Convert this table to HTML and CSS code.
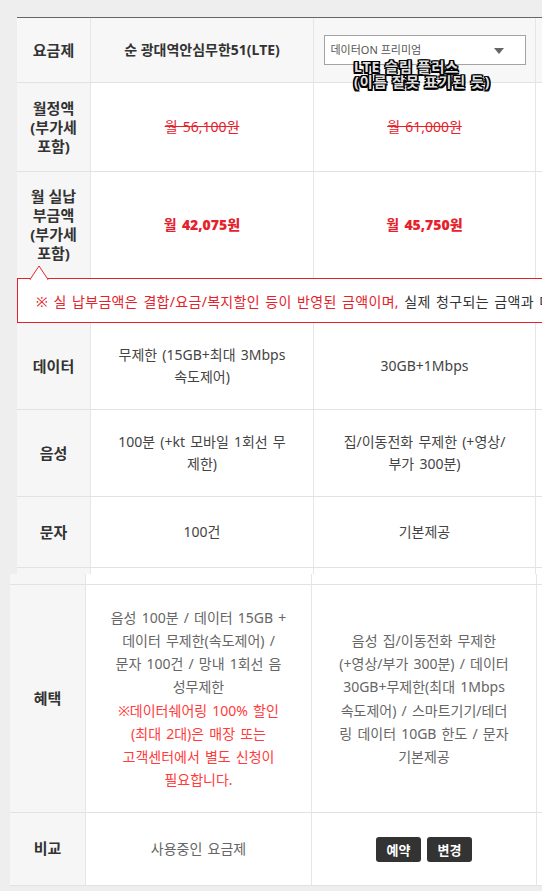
FILE: index.html
```html
<!DOCTYPE html>
<html lang="ko">
<head>
<meta charset="utf-8">
<title>요금제 비교</title>
<link rel="stylesheet" href="styles.css">
</head>
<body>
<div class="page">
  <div class="plan-table upper">
    <div class="row head">
      <div class="cell label">요금제</div>
      <div class="cell name">순 광대역안심무한51(LTE)</div>
      <div class="cell pick">
        <div class="select">데이터ON 프리미엄<span class="caret"></span></div>
        <div class="note">LTE 슬림 플러스<br>(이름 잘못 표기된 듯)</div>
      </div>
      <div class="cell"></div>
    </div>
    <div class="row r-month">
      <div class="cell label">월정액<br>(부가세<br>포함)</div>
      <div class="cell"><span class="old">월 56,100원</span></div>
      <div class="cell"><span class="old">월 61,000원</span></div>
      <div class="cell"></div>
    </div>
    <div class="row r-real">
      <div class="cell label">월 실납<br>부금액<br>(부가세<br>포함)</div>
      <div class="cell"><span class="price">월 <b>42,075원</b></span></div>
      <div class="cell"><span class="price">월 <b>45,750원</b></span></div>
      <div class="cell"></div>
    </div>
    <div class="tip">
      <svg class="tip-arrow" width="20" height="15" viewBox="0 0 20 15"><polygon points="1,14.5 10,1 19,14.5" fill="#fff" stroke="#e5222b" stroke-width="1"/><rect x="1.6" y="14" width="16.8" height="2" fill="#fff"/></svg>
      <p class="tip-text"><span class="red">※ 실 납부금액은 결합/요금/복지할인 등이 반영된 금액이며,</span> 실제 청구되는 금액과 다를 수 있습니다.</p>
    </div>
    <div class="row r-data">
      <div class="cell label">데이터</div>
      <div class="cell"><span class="lines">무제한 (15GB+최대 3Mbps<br>속도제어)</span></div>
      <div class="cell">30GB+1Mbps</div>
      <div class="cell"></div>
    </div>
    <div class="row r-voice">
      <div class="cell label">음성</div>
      <div class="cell"><span class="lines">100분 (+kt 모바일 1회선 무<br>제한)</span></div>
      <div class="cell"><span class="lines">집/이동전화 무제한 (+영상/<br>부가 300분)</span></div>
      <div class="cell"></div>
    </div>
    <div class="row r-sms">
      <div class="cell label">문자</div>
      <div class="cell">100건</div>
      <div class="cell">기본제공</div>
      <div class="cell"></div>
    </div>
    <div class="row r-strip">
      <div class="cell label"></div>
      <div class="cell"></div>
      <div class="cell"></div>
      <div class="cell"></div>
    </div>
  </div>

  <div class="plan-table lower">
    <div class="row r-strip2">
      <div class="cell label"></div>
      <div class="cell"></div>
      <div class="cell"></div>
      <div class="cell"></div>
    </div>
    <div class="row r-benefit">
      <div class="cell label">혜택</div>
      <div class="cell"><div class="lines">음성 100분 / 데이터 15GB +<br>데이터 무제한(속도제어) /<br>문자 100건 / 망내 1회선 음<br>성무제한<span class="warn">※데이터쉐어링 100% 할인<br>(최대 2대)은 매장 또는<br>고객센터에서 별도 신청이<br>필요합니다.</span></div></div>
      <div class="cell"><div class="lines">음성 집/이동전화 무제한<br>(+영상/부가 300분) / 데이터<br>30GB+무제한(최대 1Mbps<br>속도제어) / 스마트기기/테더<br>링 데이터 10GB 한도 / 문자<br>기본제공</div></div>
      <div class="cell"></div>
    </div>
    <div class="row r-compare">
      <div class="cell label">비교</div>
      <div class="cell">사용중인 요금제</div>
      <div class="cell"><span class="btns"><button class="btn" type="button">예약</button><button class="btn" type="button">변경</button></span></div>
      <div class="cell"></div>
    </div>
  </div>
</div>
</body>
</html>
```

FILE: styles.css
```css
html, body {
  margin: 0;
  padding: 0;
  background: #eeeeee;
  overflow: hidden;
  height: 891px;
}

body {
  font-family: "Noto Sans", "Noto Sans CJK KR", sans-serif;
  color: #444;
}

.page {
  width: 760px;
}

.plan-table {
  background: #fff;
}

.upper {
  margin: 17px 0 0 17px;
  border-top: 1px solid #666;
}

.lower {
  margin: 0 0 0 10px;
}

.row {
  display: grid;
  box-sizing: border-box;
  border-bottom: 1px solid #e2e2e2;
}

.upper .row {
  grid-template-columns: 74px 223px 222px 200px;
}

.lower .row {
  grid-template-columns: 76px 226px 225px 200px;
}

.cell {
  box-sizing: border-box;
  display: flex;
  align-items: center;
  justify-content: center;
  text-align: center;
  border-right: 1px solid #e6e6e6;
  padding: 0 10px;
  font-size: 14px;
  line-height: 22px;
  word-spacing: 1.5px;
}

.lines {
  display: block;
  white-space: nowrap;
}

.cell.label {
  background: #f6f6f6;
  color: #333;
  font-weight: 700;
  font-size: 15px;
  line-height: 19px;
  padding: 0 4px;
  word-spacing: 0;
}

.head {
  height: 65px;
  background: #f7f7f7;
}

.head .cell.label {
  background: #f7f7f7;
}

.name {
  font-weight: 700;
  color: #333;
  white-space: nowrap;
  padding: 0;
  word-spacing: 0;
}

.pick {
  position: relative;
  padding: 0;
}

.select {
  box-sizing: border-box;
  width: 202px;
  height: 30px;
  border: 1px solid #a3a3a3;
  background: #fff;
  display: flex;
  align-items: center;
  padding-left: 6px;
  font-size: 11px;
  color: #555;
  position: relative;
  text-align: left;
  word-spacing: 0;
}

.caret {
  position: absolute;
  right: 21px;
  top: 12px;
  width: 0;
  height: 0;
  border-left: 5px solid transparent;
  border-right: 5px solid transparent;
  border-top: 6px solid #666;
}

.note {
  position: absolute;
  left: 40px;
  top: 41px;
  z-index: 5;
  text-align: left;
  font-size: 14px;
  line-height: 15px;
  font-weight: 700;
  letter-spacing: 1px;
  word-spacing: 0;
  color: #e0e0e0;
  white-space: nowrap;
  text-shadow:
    -1.5px -1.5px 0 #000, 1.5px -1.5px 0 #000, -1.5px 1.5px 0 #000, 1.5px 1.5px 0 #000,
    0 -1.5px 0 #000, 0 1.5px 0 #000, -1.5px 0 0 #000, 1.5px 0 0 #000;
}

.r-month {
  height: 89px;
}

.r-real {
  height: 106px;
  border-bottom: none;
}

.old {
  color: #e5222b;
  text-decoration: line-through;
}

.price {
  color: #e5222b;
  font-weight: 700;
}

.tip {
  position: relative;
  box-sizing: border-box;
  height: 45px;
  border: 1px solid #e5222b;
  border-right: none;
  background: #fff;
  display: flex;
  align-items: center;
  padding-left: 18px;
}

.tip-arrow {
  position: absolute;
  left: 11px;
  top: -14px;
  display: block;
}

.tip-text {
  margin: 0;
  font-size: 14px;
  white-space: nowrap;
  color: #333;
  letter-spacing: 0.3px;
  word-spacing: 1.5px;
}

.red {
  color: #e5222b;
}

.r-data,
.r-voice {
  height: 87px;
}

.r-sms {
  height: 71px;
}

.r-strip {
  height: 6px;
  border-bottom: none;
}

.r-strip2 {
  height: 11px;
}

.lower .cell {
  color: #666;
  line-height: 23.2px;
}

.lower .cell.label {
  color: #333;
}

.r-benefit {
  height: 228px;
}

.warn {
  display: block;
  color: #ff3b3b;
}

.r-compare {
  height: 73px;
}

.btns {
  display: flex;
  gap: 6px;
}

.btn {
  width: 45px;
  height: 25px;
  border: none;
  border-radius: 3px;
  background: #333;
  color: #fff;
  font-family: "Noto Sans CJK KR", sans-serif;
  font-size: 13px;
  font-weight: 700;
  padding: 0;
  line-height: 25px;
  word-spacing: 0;
}
```
